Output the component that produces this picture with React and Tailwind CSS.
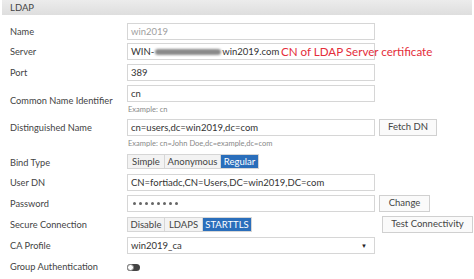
import React from 'react';

const Row = ({ label, top, children, labelClass = '' }) => (
  <div className="flex items-start" style={{ marginTop: top }}>
    <div className={`w-[127px] shrink-0 pl-[10px] text-[9.25px] text-[#444] leading-[17px] whitespace-nowrap ${labelClass}`}>{label}</div>
    <div className="flex-1">{children}</div>
  </div>
);

const Input = ({ children, className = '' }) => (
  <div className={`w-[248px] shrink-0 h-[17px] border border-[#d6d6d6] bg-white px-[3px] text-[9.5px] leading-[15px] text-[#333] flex items-center whitespace-nowrap ${className}`}>
    {children}
  </div>
);

const Btn = ({ children, className = '' }) => (
  <div className={`h-[17px] shrink-0 border border-[#d0d0d0] bg-[#fafafa] text-[9.5px] text-[#444] flex items-center justify-center whitespace-nowrap ${className}`}>{children}</div>
);

const Seg = ({ items, active, widths }) => (
  <div className="flex h-[15px] border border-[#d6d6d6] w-fit">
    {items.map((it, i) => (
      <div
        key={it}
        style={{ width: widths[i] }}
        className={`flex items-center justify-center text-[9.5px] leading-none whitespace-nowrap ${i > 0 ? 'border-l border-[#d6d6d6]' : ''} ${it === active ? 'bg-[#2a6ebb] text-white' : 'bg-[#f3f3f3] text-[#444]'}`}
      >
        {it}
      </div>
    ))}
  </div>
);

export default function App() {
  return (
    <div className="w-[474px] h-[279px] bg-white overflow-hidden font-['Lato','Open_Sans',sans-serif]">
      <div className="ml-[2px] w-[470px] h-[15px] bg-gradient-to-b from-[#ececec] to-[#dedede] pl-[8px] text-[9.5px] leading-[15px] text-[#444]">LDAP</div>

      <Row label="Name" top={8}>
        <Input className="text-[#a0a0a0]">win2019</Input>
      </Row>
      <Row label="Server" top={3}>
        <div className="relative">
          <Input>
            WIN-<span className="inline-block w-[66px] h-[6px] rounded-full bg-[#8a8a8a] blur-[1.2px] mx-[1px]"></span>win2019.com
          </Input>
          {/* annotation laid over the field */}
          <span className="absolute left-[154px] top-[2px] text-[11.6px] text-[#e42d3a] leading-[13px] whitespace-nowrap">CN of LDAP Server certificate</span>
        </div>
      </Row>
      <Row label="Port" top={4}>
        <Input>389</Input>
      </Row>
      <Row label="Common Name Identifier" top={4} labelClass="pt-[7px]">
        <Input>cn</Input>
        <div className="text-[7.5px] text-[#888] leading-[10px] mt-[3px] pl-[1px]">Example: cn</div>
      </Row>
      <Row label="Distinguished Name" top={4}>
        <div className="flex gap-[4px]">
          <Input>cn=users,dc=win2019,dc=com</Input>
          <Btn className="w-[58px]">Fetch DN</Btn>
        </div>
        <div className="text-[7.5px] text-[#888] leading-[10px] mt-[3px] pl-[1px]">Example: cn=John Doe,dc=example,dc=com</div>
      </Row>
      <Row label="Bind Type" top={5} labelClass="leading-[15px]">
        <Seg items={['Simple', 'Anonymous', 'Regular']} active="Regular" widths={[36, 56, 38]} />
      </Row>
      <Row label="User DN" top={3}>
        <Input>CN=fortiadc,CN=Users,DC=win2019,DC=com</Input>
      </Row>
      <Row label="Password" top={4}>
        <div className="flex gap-[4px]">
          <Input className="gap-[3px] pl-[5px]">
            {[0, 1, 2, 3, 4, 5, 6, 7].map(i => (
              <span key={i} className="w-[3px] h-[3px] rounded-full bg-[#666]"></span>
            ))}
          </Input>
          <Btn className="w-[51px]">Change</Btn>
        </div>
      </Row>
      <Row label="Secure Connection" top={4}>
        <div className="flex items-center">
          <Seg items={['Disable', 'LDAPS', 'STARTTLS']} active="STARTTLS" widths={[36, 38, 49]} />
          <Btn className="w-[91px] ml-[130px]">Test Connectivity</Btn>
        </div>
      </Row>
      <Row label="CA Profile" top={4}>
        <Input className="justify-between">
          <span>win2019_ca</span>
          <span className="text-[6px] text-[#222] mr-[4px]">▼</span>
        </Input>
      </Row>
      <Row label="Group Authentication" top={3} labelClass="leading-[20px]">
        <div className="h-[20px] flex items-center">
          <div className="w-[13px] h-[7px] rounded-full bg-[#444] relative">
            <div className="absolute left-0 top-0 w-[7px] h-[7px] rounded-full bg-white border border-[#888]"></div>
          </div>
        </div>
      </Row>
    </div>
  );
}
